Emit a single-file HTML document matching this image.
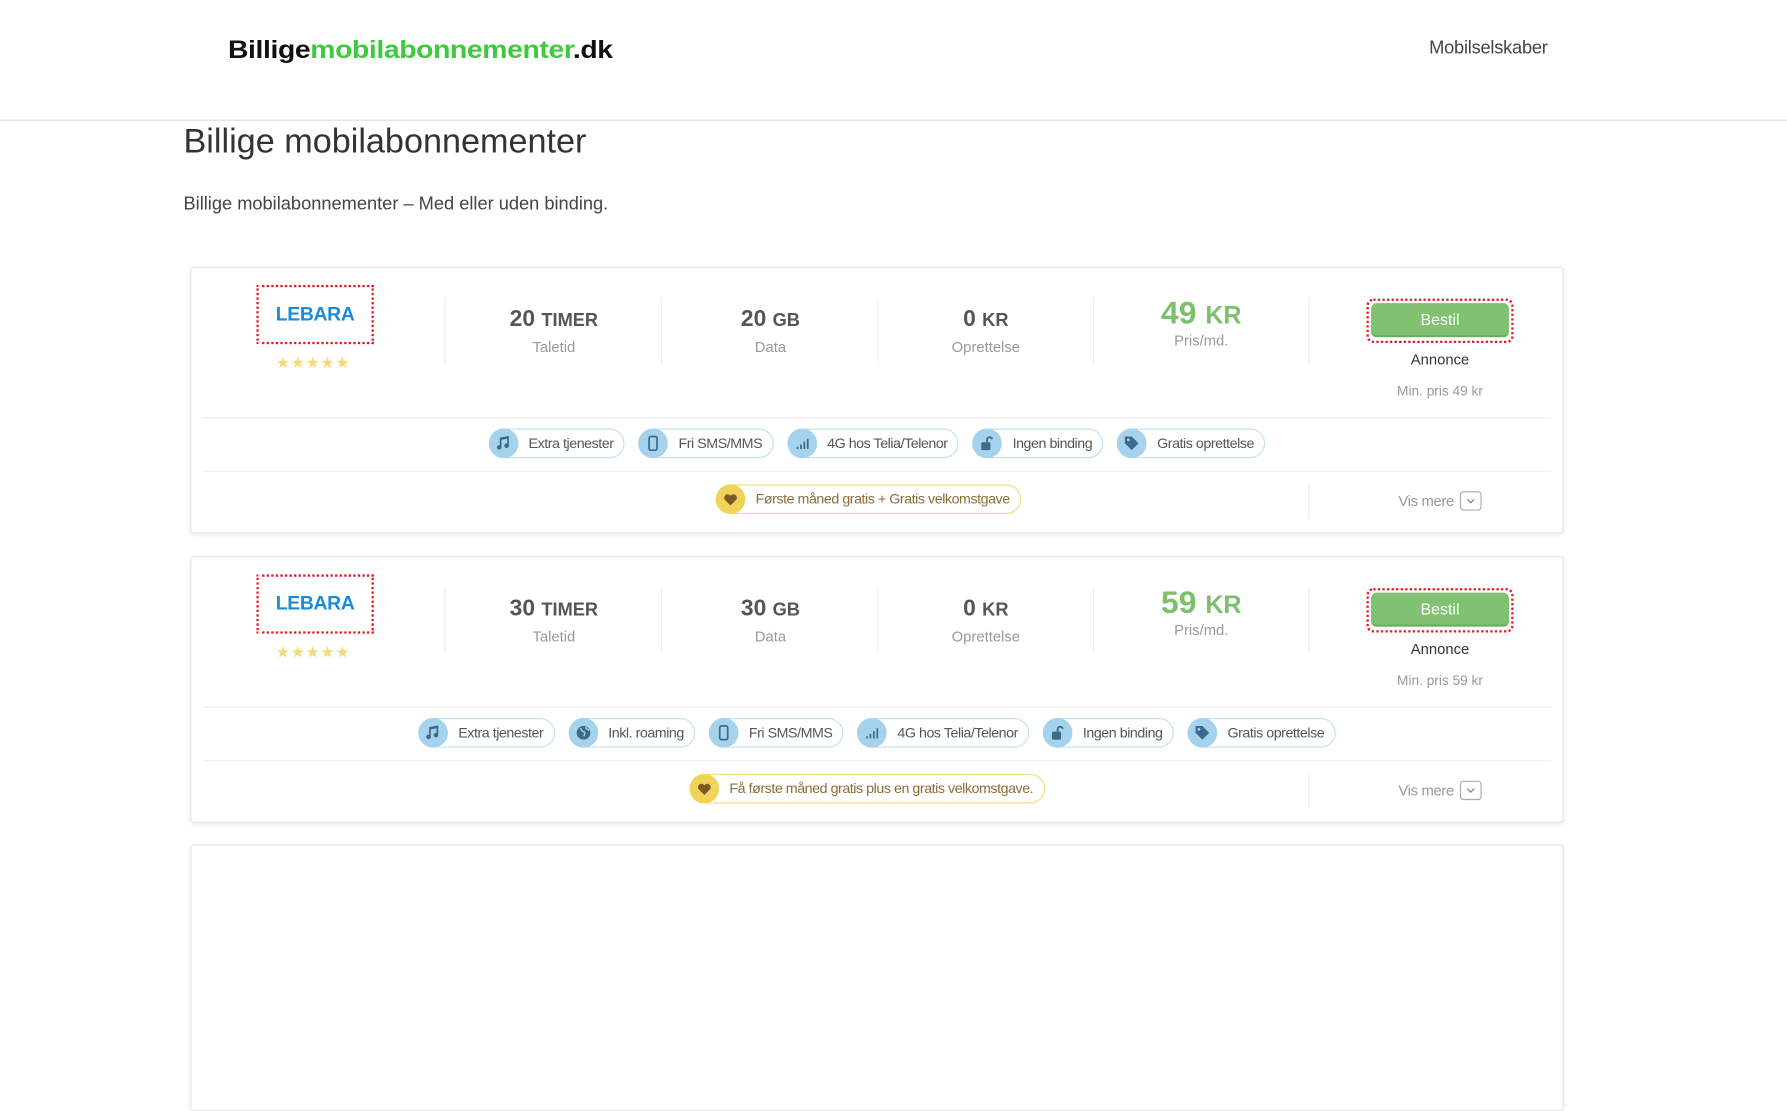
<!DOCTYPE html>
<html><head><meta charset="utf-8">
<style>
html,body{margin:0;padding:0;background:#fff;overflow:hidden;width:1787px;height:860px}
#w{position:absolute;left:0;top:0;width:1568px;height:755px;transform:scale(1.1397);transform-origin:0 0;font-family:"Liberation Sans",sans-serif;color:#444}
.abs{position:absolute}
.logo{left:200px;top:31px;font-size:22px;font-weight:bold;letter-spacing:-0.3px;color:#111;white-space:nowrap;transform:scaleX(1.13);transform-origin:0 0}
.logo span{color:#3ec93e}
.nav{left:1254px;top:34px;font-size:16px;color:#444;letter-spacing:-.2px}
.hr{left:0;top:105px;width:1568px;height:1px;background:#ddd}
h1{position:absolute;left:161px;top:108px;margin:0;font-size:30px;font-weight:normal;color:#333;letter-spacing:0px}
.lead{left:161px;top:171px;font-size:16px;color:#444}
.card{position:absolute;left:167px;width:1203px;height:232px;border:1px solid #e6e6e6;border-radius:3px;box-shadow:0 1px 4px rgba(0,0,0,.08);background:#fff}
.lb{position:absolute;left:57px;top:15px;width:99px;height:48px;border:2px dotted #e8171c;text-align:center;line-height:48px;color:#1b8ad8;font-weight:bold;font-size:17px;letter-spacing:-.3px}
.stars{position:absolute;left:74px;top:75px;color:#f7d87a;font-size:14px;letter-spacing:0.5px}
.sep{position:absolute;top:26px;width:1px;height:58px;background:#eee}
.col{position:absolute;top:34px;width:190px;text-align:center}
.v{font-size:20px;font-weight:bold;color:#555}
.v small{font-size:16px}
.l{font-size:13px;color:#999;margin-top:5px}
.pr{position:absolute;top:24px;width:190px;text-align:center}
.pr .v{color:#7dbf6d;font-size:28px}
.pr .v small{font-size:22px}
.pr .l{margin-top:0}
.btn{position:absolute;left:1031px;top:27px;width:125px;height:35px;border:2px dotted #e8171c;border-radius:6px}
.btn div{margin:2px;height:30px;background:#80c172;border-radius:5px;border-bottom:2px solid #6cad5e;box-sizing:border-box;color:#fff;text-align:center;line-height:29px;font-size:14px}
.ann{position:absolute;left:1031px;width:129px;top:73px;text-align:center;font-size:13px;color:#333}
.min{position:absolute;left:1031px;width:129px;top:101px;text-align:center;font-size:12px;color:#999}
.div{position:absolute;left:10px;width:1183px;height:1px;background:#eee}
.pills{position:absolute;left:0;width:1203px;display:flex;justify-content:center;gap:12px}
.pill{height:26px;border:1px solid #bfe0f3;border-radius:14px;display:flex;align-items:center;padding-right:9px;font-size:12.5px;letter-spacing:-0.4px;color:#555;white-space:nowrap;box-sizing:border-box}
.ic{width:26px;height:26px;border-radius:50%;background:#a5d2ec;margin-left:-1px;margin-right:9px;display:flex;align-items:center;justify-content:center}
.gp{position:absolute;height:26px;border:1px solid #f1dc7e;border-radius:14px;display:flex;align-items:center;padding-right:9px;font-size:12.5px;letter-spacing:-0.4px;color:#8b6c36;white-space:nowrap;box-sizing:border-box}
.gp .ic{background:#f2d35a}
.vs{position:absolute;left:980px;width:1px;height:32px;background:#eee}
.vm{position:absolute;left:1059px;font-size:13px;color:#999;display:flex;align-items:center;letter-spacing:-.3px}
.vm b{display:inline-block;width:17px;height:15px;border:1px solid #aaa;border-radius:3px;margin-left:5px;position:relative}
</style></head><body><div id="w">
<div class="abs logo">Billige<span>mobilabonnementer</span>.dk</div>
<div class="abs nav">Mobilselskaber</div>
<div class="abs hr"></div>
<h1>Billige mobilabonnementer</h1>
<div class="abs lead">Billige mobilabonnementer – Med eller uden binding.</div>

<div class="card" style="top:234px">
<div class="lb">LEBARA</div><div class="stars">★★★★★</div>
<div class="sep" style="left:222px"></div><div class="sep" style="left:412px"></div><div class="sep" style="left:602px"></div><div class="sep" style="left:791px"></div><div class="sep" style="left:980px"></div>
<div class="col" style="left:223px"><div class="v">20 <small>TIMER</small></div><div class="l">Taletid</div></div>
<div class="col" style="left:413px"><div class="v">20 <small>GB</small></div><div class="l">Data</div></div>
<div class="col" style="left:602px"><div class="v">0 <small>KR</small></div><div class="l">Oprettelse</div></div>
<div class="pr" style="left:791px"><div class="v">49 <small>KR</small></div><div class="l">Pris/md.</div></div>
<div class="btn"><div>Bestil</div></div>
<div class="ann">Annonce</div><div class="min">Min. pris 49 kr</div>
<div class="div" style="top:131px"></div>
<div class="pills" style="top:141px">
<div class="pill"><span class="ic"><svg width="14" height="14" viewBox="0 0 14 14"><path d="M5 2v8.5a2 2 0 1 1-1.5-1.9V2l8-1.5v8.5a2 2 0 1 1-1.5-1.9V3L5 4z" fill="#3d6a8a"/></svg></span>Extra tjenester</div>
<div class="pill"><span class="ic"><svg width="10" height="14" viewBox="0 0 10 14"><rect x="1.5" y="1" width="7" height="12" rx="1.5" fill="none" stroke="#3d6a8a" stroke-width="1.5"/></svg></span>Fri SMS/MMS</div>
<div class="pill"><span class="ic"><svg width="12" height="10" viewBox="0 0 12 10"><path d="M1 8h1.5v2H1zM4 6h1.5v4H4zM7 3.5h1.5V10H7zM10 1h1.5v9H10z" fill="#3d6a8a"/></svg></span>4G hos Telia/Telenor</div>
<div class="pill"><span class="ic"><svg width="12" height="14" viewBox="0 0 12 14"><path d="M6 6V3.5a2.3 2.3 0 0 1 4.5 0" fill="none" stroke="#3d6a8a" stroke-width="1.6"/><rect x="1" y="6" width="8" height="7" rx="1" fill="#3d6a8a"/></svg></span>Ingen binding</div>
<div class="pill"><span class="ic"><svg width="14" height="14" viewBox="0 0 14 14"><path d="M1 1h6l6 6-6 6-6-6z" fill="#3d6a8a"/><circle cx="4" cy="4" r="1.2" fill="#a5d2ec"/></svg></span>Gratis oprettelse</div>
</div>
<div class="div" style="top:178px"></div>
<div class="gp" style="left:460px;top:190px"><span class="ic"><svg width="12" height="11" viewBox="0 0 12 11"><path d="M6 10.5L1 5.5a2.8 2.8 0 0 1 5-3.5 2.8 2.8 0 0 1 5 3.5z" fill="#7a5a22"/></svg></span>Første måned gratis + Gratis velkomstgave</div>
<div class="vs" style="top:189px"></div>
<div class="vm" style="top:196px">Vis mere<b><svg width="17" height="15" viewBox="0 0 17 15" style="position:absolute;left:0;top:0"><path d="M5.5 6l3 3 3-3" fill="none" stroke="#888" stroke-width="1.2"/></svg></b></div>
</div>

<div class="card" style="top:488px">
<div class="lb">LEBARA</div><div class="stars">★★★★★</div>
<div class="sep" style="left:222px"></div><div class="sep" style="left:412px"></div><div class="sep" style="left:602px"></div><div class="sep" style="left:791px"></div><div class="sep" style="left:980px"></div>
<div class="col" style="left:223px"><div class="v">30 <small>TIMER</small></div><div class="l">Taletid</div></div>
<div class="col" style="left:413px"><div class="v">30 <small>GB</small></div><div class="l">Data</div></div>
<div class="col" style="left:602px"><div class="v">0 <small>KR</small></div><div class="l">Oprettelse</div></div>
<div class="pr" style="left:791px"><div class="v">59 <small>KR</small></div><div class="l">Pris/md.</div></div>
<div class="btn"><div>Bestil</div></div>
<div class="ann">Annonce</div><div class="min">Min. pris 59 kr</div>
<div class="div" style="top:131px"></div>
<div class="pills" style="top:141px">
<div class="pill"><span class="ic"><svg width="14" height="14" viewBox="0 0 14 14"><path d="M5 2v8.5a2 2 0 1 1-1.5-1.9V2l8-1.5v8.5a2 2 0 1 1-1.5-1.9V3L5 4z" fill="#3d6a8a"/></svg></span>Extra tjenester</div>
<div class="pill"><span class="ic"><svg width="14" height="14" viewBox="0 0 14 14"><circle cx="7" cy="7" r="6" fill="#3d6a8a"/><path d="M4 3c2 1 1 3 3 3s1 3 0 4M9 2c0 2 2 2 3 3" fill="none" stroke="#a5d2ec" stroke-width="1.2"/></svg></span>Inkl. roaming</div>
<div class="pill"><span class="ic"><svg width="10" height="14" viewBox="0 0 10 14"><rect x="1.5" y="1" width="7" height="12" rx="1.5" fill="none" stroke="#3d6a8a" stroke-width="1.5"/></svg></span>Fri SMS/MMS</div>
<div class="pill"><span class="ic"><svg width="12" height="10" viewBox="0 0 12 10"><path d="M1 8h1.5v2H1zM4 6h1.5v4H4zM7 3.5h1.5V10H7zM10 1h1.5v9H10z" fill="#3d6a8a"/></svg></span>4G hos Telia/Telenor</div>
<div class="pill"><span class="ic"><svg width="12" height="14" viewBox="0 0 12 14"><path d="M6 6V3.5a2.3 2.3 0 0 1 4.5 0" fill="none" stroke="#3d6a8a" stroke-width="1.6"/><rect x="1" y="6" width="8" height="7" rx="1" fill="#3d6a8a"/></svg></span>Ingen binding</div>
<div class="pill"><span class="ic"><svg width="14" height="14" viewBox="0 0 14 14"><path d="M1 1h6l6 6-6 6-6-6z" fill="#3d6a8a"/><circle cx="4" cy="4" r="1.2" fill="#a5d2ec"/></svg></span>Gratis oprettelse</div>
</div>
<div class="div" style="top:178px"></div>
<div class="gp" style="left:437px;top:190px"><span class="ic"><svg width="12" height="11" viewBox="0 0 12 11"><path d="M6 10.5L1 5.5a2.8 2.8 0 0 1 5-3.5 2.8 2.8 0 0 1 5 3.5z" fill="#7a5a22"/></svg></span>Få første måned gratis plus en gratis velkomstgave.</div>
<div class="vs" style="top:189px"></div>
<div class="vm" style="top:196px">Vis mere<b><svg width="17" height="15" viewBox="0 0 17 15" style="position:absolute;left:0;top:0"><path d="M5.5 6l3 3 3-3" fill="none" stroke="#888" stroke-width="1.2"/></svg></b></div>
</div>

<div class="card" style="top:741px"></div>
</div></body></html>
